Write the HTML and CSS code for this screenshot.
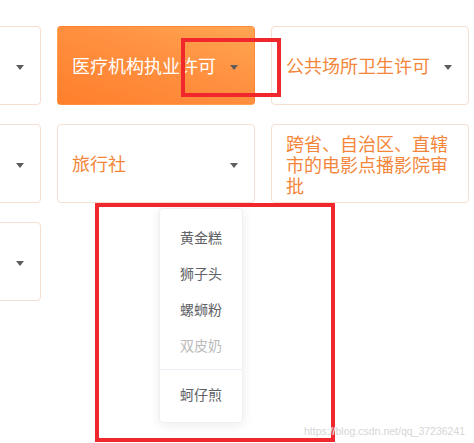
FILE: index.html
```html
<!DOCTYPE html>
<html lang="zh-CN">
<head>
<meta charset="utf-8">
<title>许可类型</title>
<link rel="stylesheet" href="styles.css">
</head>
<body>
<div class="page">
  <div class="grid">
    <div class="card"><span class="label"></span><span class="arrow"></span></div>
    <div class="card active"><span class="label">医疗机构执业许可</span><span class="arrow"></span></div>
    <div class="card"><span class="label">公共场所卫生许可</span><span class="arrow"></span></div>

    <div class="card"><span class="label"></span><span class="arrow"></span></div>
    <div class="card"><span class="label">旅行社</span><span class="arrow"></span></div>
    <div class="card multi"><span class="label">跨省、自治区、直辖市的电影点播影院审批</span></div>

    <div class="card"><span class="label"></span><span class="arrow"></span></div>
  </div>

  <ul class="menu">
    <li class="item">黄金糕</li>
    <li class="item">狮子头</li>
    <li class="item">螺蛳粉</li>
    <li class="item disabled">双皮奶</li>
    <li class="item divided">蚵仔煎</li>
  </ul>

  <div class="mark mark-arrow"></div>
  <div class="mark mark-menu"></div>
  <div class="watermark">https://blog.csdn.net/qq_37236241</div>
</div>
</body>
</html>
```

FILE: styles.css
```css
html, body {
  margin: 0;
  padding: 0;
  background: #ffffff;
}

body {
  font-family: "Noto Sans CJK SC", "Noto Sans", sans-serif;
  width: 474px;
  height: 443px;
  overflow: hidden;
}

.page {
  position: relative;
  width: 474px;
  height: 443px;
  overflow: hidden;
}

.grid {
  display: grid;
  grid-template-columns: 198px 198px 198px;
  grid-auto-rows: 79px;
  column-gap: 16px;
  row-gap: 19px;
  padding-top: 26px;
  margin-left: -157px;
}

.card {
  box-sizing: border-box;
  border: 1px solid #f6dfd0;
  border-radius: 4px;
  background: #fff;
  display: flex;
  align-items: center;
  justify-content: space-between;
  padding: 0 16px 0 14px;
  color: #f3863a;
  font-size: 18px;
  line-height: 21px;
}

.card.active {
  border-color: transparent;
  background: linear-gradient(200deg, #ffa652 0%, #ff9040 45%, #ff7f2c 100%);
  color: #fff;
}

.card.multi {
  align-items: flex-start;
  padding-top: 8px;
}

.card.multi .label {
  width: 165px;
}

.label {
  white-space: normal;
}

.arrow {
  width: 0;
  height: 0;
  border-left: 4px solid transparent;
  border-right: 4px solid transparent;
  border-top: 5px solid #5d5d5d;
  margin-top: 3px;
}

.menu {
  position: absolute;
  left: 159px;
  top: 208px;
  width: 84px;
  box-sizing: border-box;
  margin: 0;
  padding: 10px 0;
  list-style: none;
  background: #fff;
  border: 1px solid #f0f0f2;
  border-radius: 4px;
  box-shadow: 0 2px 12px rgba(0, 0, 0, 0.08);
}

.item {
  padding: 0 20px;
  line-height: 36px;
  font-size: 14px;
  color: #606266;
  white-space: nowrap;
}

.item.disabled {
  color: #bbbbbb;
}

.item.divided {
  margin-top: 6px;
  border-top: 1px solid #ebeef5;
}

.item.divided::before {
  content: "";
  display: block;
  height: 6px;
}

.mark {
  position: absolute;
  box-sizing: border-box;
  border: 4px solid #f0282d;
}

.mark-arrow {
  left: 181px;
  top: 38px;
  width: 100px;
  height: 59px;
}

.mark-menu {
  left: 95px;
  top: 203px;
  width: 240px;
  height: 239px;
}

.watermark {
  position: absolute;
  left: 304px;
  top: 425px;
  font-family: "Liberation Sans", Arial, sans-serif;
  font-size: 10.5px;
  color: #d6d6d6;
  text-shadow: 0 0 1px #ffffff;
  white-space: nowrap;
}
```
